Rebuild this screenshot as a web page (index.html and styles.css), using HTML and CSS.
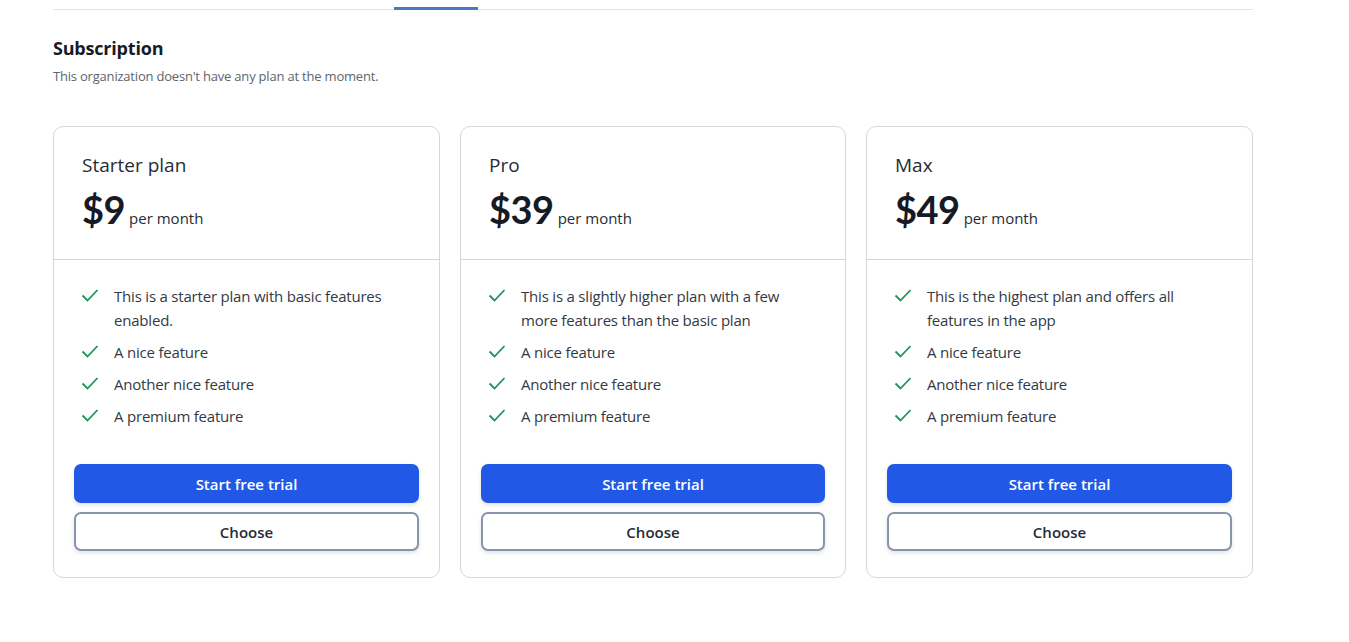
FILE: index.html
```html
<!DOCTYPE html>
<html>
<head>
<meta charset="utf-8">
<link rel="stylesheet" href="styles.css">
</head>
<body>
<div class="page">
  <div class="tabs"><div class="tab-spacer"></div><div class="tab-active"></div></div>
  <h2 class="title">Subscription</h2>
  <p class="subtitle">This organization doesn't have any plan at the moment.</p>
  <div class="plans">
    <div class="card">
      <div class="card-head">
        <div class="plan-name">Starter plan</div>
        <div class="price"><span class="amount">$9</span><span class="per">per month</span></div>
      </div>
      <div class="card-body">
        <ul class="features">
          <li><svg class="check" viewBox="0 0 20 20"><path d="M2.5 10.5l5 5 10-10.5" /></svg><span>This is a starter plan with basic features enabled.</span></li>
          <li><svg class="check" viewBox="0 0 20 20"><path d="M2.5 10.5l5 5 10-10.5" /></svg><span>A nice feature</span></li>
          <li><svg class="check" viewBox="0 0 20 20"><path d="M2.5 10.5l5 5 10-10.5" /></svg><span>Another nice feature</span></li>
          <li><svg class="check" viewBox="0 0 20 20"><path d="M2.5 10.5l5 5 10-10.5" /></svg><span>A premium feature</span></li>
        </ul>
        <div class="actions">
          <button class="btn btn-primary">Start free trial</button>
          <button class="btn btn-outline">Choose</button>
        </div>
      </div>
    </div>
    <div class="card">
      <div class="card-head">
        <div class="plan-name">Pro</div>
        <div class="price"><span class="amount">$39</span><span class="per">per month</span></div>
      </div>
      <div class="card-body">
        <ul class="features">
          <li><svg class="check" viewBox="0 0 20 20"><path d="M2.5 10.5l5 5 10-10.5" /></svg><span>This is a slightly higher plan with a few more features than the basic plan</span></li>
          <li><svg class="check" viewBox="0 0 20 20"><path d="M2.5 10.5l5 5 10-10.5" /></svg><span>A nice feature</span></li>
          <li><svg class="check" viewBox="0 0 20 20"><path d="M2.5 10.5l5 5 10-10.5" /></svg><span>Another nice feature</span></li>
          <li><svg class="check" viewBox="0 0 20 20"><path d="M2.5 10.5l5 5 10-10.5" /></svg><span>A premium feature</span></li>
        </ul>
        <div class="actions">
          <button class="btn btn-primary">Start free trial</button>
          <button class="btn btn-outline">Choose</button>
        </div>
      </div>
    </div>
    <div class="card">
      <div class="card-head">
        <div class="plan-name">Max</div>
        <div class="price"><span class="amount">$49</span><span class="per">per month</span></div>
      </div>
      <div class="card-body">
        <ul class="features">
          <li><svg class="check" viewBox="0 0 20 20"><path d="M2.5 10.5l5 5 10-10.5" /></svg><span>This is the highest plan and offers all features in the app</span></li>
          <li><svg class="check" viewBox="0 0 20 20"><path d="M2.5 10.5l5 5 10-10.5" /></svg><span>A nice feature</span></li>
          <li><svg class="check" viewBox="0 0 20 20"><path d="M2.5 10.5l5 5 10-10.5" /></svg><span>Another nice feature</span></li>
          <li><svg class="check" viewBox="0 0 20 20"><path d="M2.5 10.5l5 5 10-10.5" /></svg><span>A premium feature</span></li>
        </ul>
        <div class="actions">
          <button class="btn btn-primary">Start free trial</button>
          <button class="btn btn-outline">Choose</button>
        </div>
      </div>
    </div>
  </div>
</div>
</body>
</html>
```
FILE: styles.css
```css
* { box-sizing: border-box; }
html, body { margin: 0; padding: 0; background: #fff; }
body { font-family: "Open Sans", "Lato", sans-serif; color: #1f2937; }
.page { width: 1200px; margin-left: 53px; }
.tabs { display: flex; height: 10px; border-bottom: 1px solid #e2e4e8; align-items: flex-end; }
.tab-spacer { width: 341px; }
.tab-active { width: 84px; height: 3px; background: #4a78c6; margin-bottom: -1px; }
.title { margin: 26px 0 0; font-size: 18px; font-weight: 700; color: #161b26; line-height: 24px; letter-spacing: -0.2px; }
.subtitle { margin: 7px 0 0; font-size: 13px; color: #5d6470; line-height: 18px; letter-spacing: -0.2px; }
.plans { display: grid; grid-template-columns: 387px 386px 387px; gap: 20px; margin-top: 41px; }
.card { border: 1px solid #d5d7db; border-radius: 10px; height: 452px; display: flex; flex-direction: column; }
.card-head { height: 133px; border-bottom: 1px solid #d5d7db; padding: 25px 28px 0; }
.plan-name { font-size: 19px; line-height: 26px; color: #262c36; }
.price { display: flex; align-items: baseline; margin-top: 8px; }
.amount { font-family: "Lato", sans-serif; font-size: 38px; font-weight: 700; color: #151a24; line-height: 46px; letter-spacing: -0.5px; }
.per { font-size: 15px; color: #262c36; margin-left: 4px; }
.card-body { padding: 24px 20px 0; display: flex; flex-direction: column; }
.features { list-style: none; margin: 0; padding: 0 8px 0 6px; display: flex; flex-direction: column; gap: 8px; }
.features li { display: flex; align-items: flex-start; font-size: 15px; line-height: 24px; color: #333a45; letter-spacing: -0.2px; }
.check { width: 20px; height: 20px; flex: none; margin: 1px 14px 0 0; fill: none; stroke: #23925a; stroke-width: 1.8; }
.actions { margin-top: 36px; display: flex; flex-direction: column; gap: 9px; }
.btn { font-family: inherit; font-size: 15px; font-weight: 600; height: 39px; border-radius: 7px; cursor: pointer; }
.btn-primary { background: #2159e6; color: #fff; border: none; box-shadow: 0 2px 4px rgba(0,0,0,0.12); }
.btn-outline { background: #fff; color: #262c36; border: 2px solid #8794ab; box-shadow: 0 2px 4px rgba(0,0,0,0.12); }
```
